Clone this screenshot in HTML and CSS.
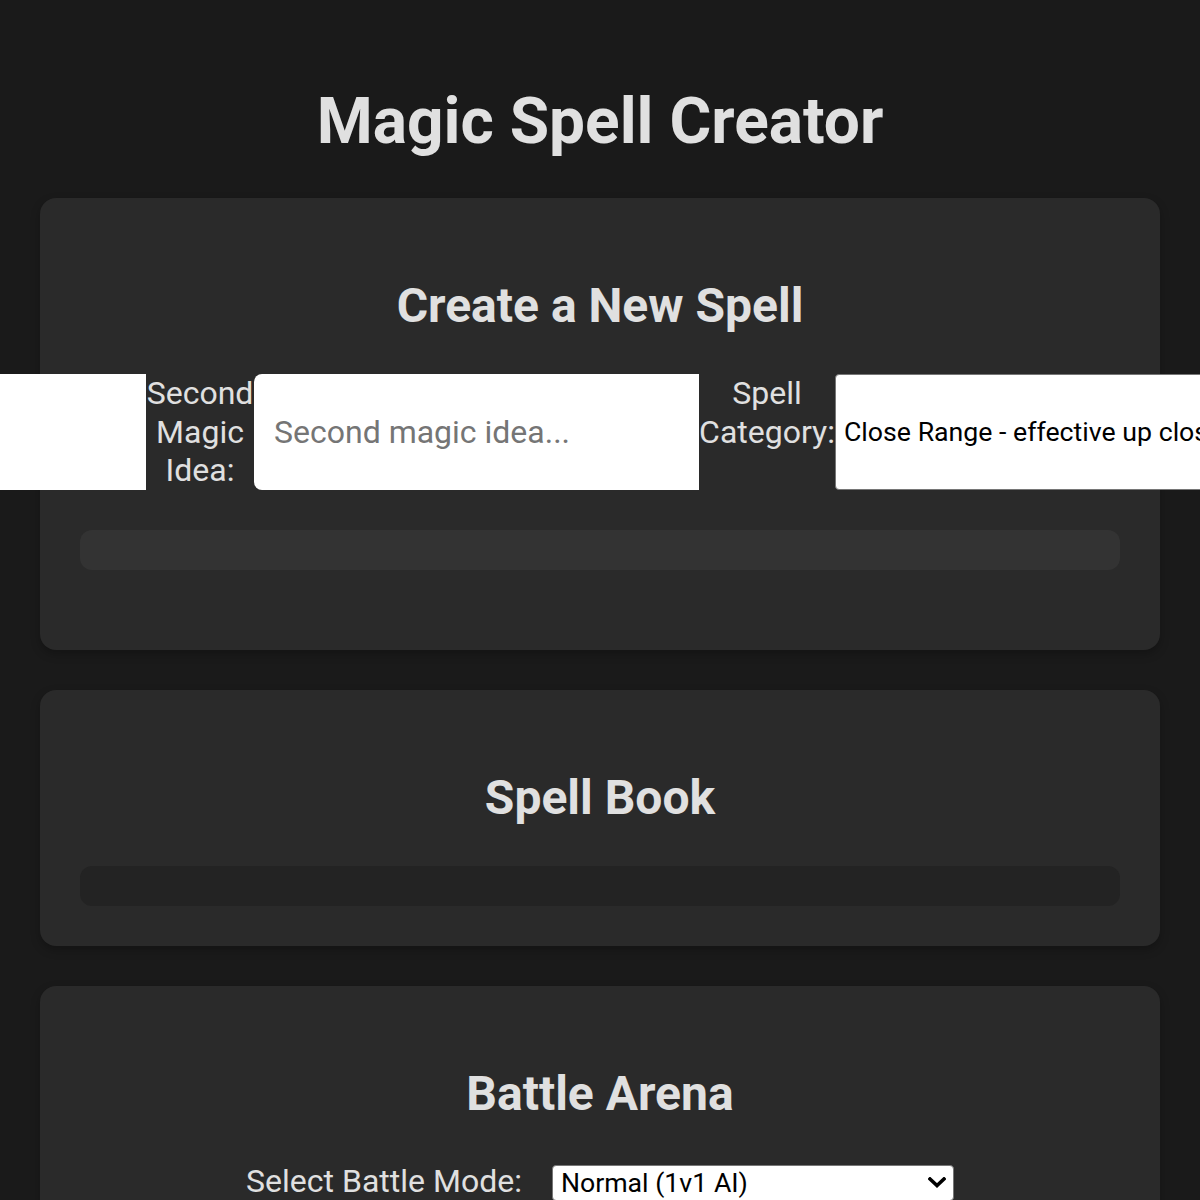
FILE: index.html
```html
<!DOCTYPE html>
<html lang="en">
<head>
<meta charset="utf-8">
<title>Magic Spell Creator</title>
<link rel="stylesheet" href="styles.css">
</head>
<body>
<h1 class="app-title">Magic Spell Creator</h1>

<section class="card">
  <h2 class="card-title">Create a New Spell</h2>
  <div class="spell-row">
    <label class="field-label label-first" for="idea1">First Magic Idea:</label>
    <input class="idea-input" id="idea1" type="text" placeholder="First magic idea...">
    <label class="field-label label-second" for="idea2">Second Magic Idea:</label>
    <input class="idea-input" id="idea2" type="text" placeholder="Second magic idea...">
    <label class="field-label label-cat" for="cat">Spell Category:</label>
    <select class="cat-select" id="cat">
      <option>Close Range - effective up close and personal</option>
      <option>Long Range - effective from afar</option>
    </select>
  </div>
  <div class="bar bar-light"></div>
</section>

<section class="card">
  <h2 class="card-title">Spell Book</h2>
  <div class="bar bar-dark"></div>
</section>

<section class="card">
  <h2 class="card-title">Battle Arena</h2>
  <div class="mode-row">
    <label class="mode-label" for="mode">Select Battle Mode:</label>
    <div class="mode-select-wrap">
      <select class="mode-select" id="mode">
        <option>Normal (1v1 AI)</option>
        <option>Tournament</option>
      </select>
      <svg class="chevron" width="18" height="11" viewBox="0 0 18 11" aria-hidden="true">
        <path d="M2 2 L9 8.5 L16 2" fill="none" stroke="#000" stroke-width="3.6" stroke-linecap="square" stroke-linejoin="miter"/>
      </svg>
    </div>
  </div>
</section>
</body>
</html>
```
FILE: styles.css
```css
html {
  background: #1a1a1a;
}
body {
  margin: 0;
  padding: 40px;
  background: #1a1a1a;
  color: #e0e0e0;
  font-family: Roboto, "Noto Sans", sans-serif;
  font-size: 32px;
  overflow-x: hidden;
}
.app-title {
  font-size: 64px;
  font-weight: 700;
  text-align: center;
  margin: 44px 0 39px;
  color: #e0e0e0;
}
.card {
  background: #2a2a2a;
  border-radius: 16px;
  padding: 40px;
  margin-bottom: 40px;
  box-shadow: 0 4px 10px rgba(0, 0, 0, 0.25);
}
.card-title {
  font-size: 48px;
  line-height: 56px;
  font-weight: 700;
  text-align: center;
  margin: 40px 0;
  color: #e0e0e0;
}
.spell-row {
  display: flex;
  justify-content: center;
  align-items: stretch;
}
.field-label {
  flex: 0 0 auto;
  text-align: center;
  line-height: 38.6px;
  color: #e0e0e0;
}
.label-first { width: 88px; }
.label-second { width: 108px; }
.label-cat { width: 136px; }
.idea-input {
  flex: 0 0 444px;
  box-sizing: border-box;
  border: none;
  border-radius: 8px 0 0 8px;
  background: #ffffff;
  padding: 0 20px;
  font-family: Roboto, "Noto Sans", sans-serif;
  font-size: 32px;
  color: #222;
  outline: none;
}
.idea-input::placeholder {
  color: #757575;
}
.cat-select {
  flex: 0 0 752px;
  box-sizing: border-box;
  appearance: none;
  -webkit-appearance: none;
  border: 1px solid #767676;
  border-radius: 4px;
  background: #ffffff;
  color: #000;
  font-family: Roboto, "Noto Sans", sans-serif;
  font-size: 26.7px;
  padding: 0 8px;
}
.bar {
  height: 40px;
  border-radius: 12px;
}
.bar-light {
  background: #333333;
  margin: 40px 0;
}
.bar-dark {
  background: #232323;
}
.mode-row {
  display: flex;
  justify-content: center;
  align-items: flex-start;
  gap: 30px;
}
.mode-label {
  color: #e0e0e0;
}
.mode-select-wrap {
  position: relative;
  margin-top: 3px;
}
.mode-select {
  display: block;
  width: 402px;
  box-sizing: border-box;
  appearance: none;
  -webkit-appearance: none;
  border: 1px solid #767676;
  border-radius: 4px;
  background: #ffffff;
  color: #000;
  font-family: Roboto, "Noto Sans", sans-serif;
  font-size: 26.7px;
  padding: 1px 8px;
}
.chevron {
  position: absolute;
  right: 8px;
  top: 12px;
  pointer-events: none;
}
```
